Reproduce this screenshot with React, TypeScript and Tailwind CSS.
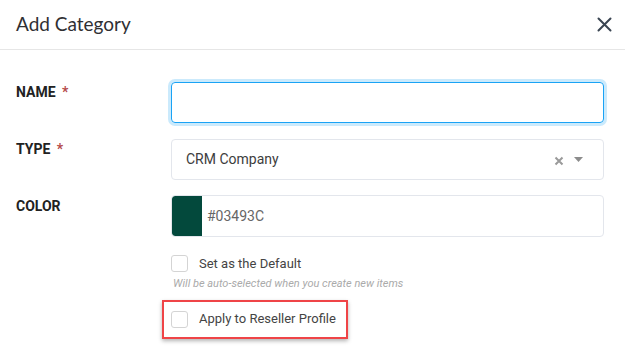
import React from "react";

export default function App() {
  return (
    <div className="w-[625px] h-[348px] bg-white overflow-hidden" style={{ fontFamily: "Roboto, sans-serif" }}>
      <div className="h-[50px] border-b border-[#e6e6e6] flex items-center justify-between pl-4 pr-[13px]">
        <div className="text-[19px] text-[#2f2f33] pb-[1px]" style={{ fontFamily: "Lato, sans-serif" }}>Add Category</div>
        <svg width="15" height="15" viewBox="0 0 15 15" className="mb-[1px]">
          <path d="M1.5 1.5 L13.5 13.5 M13.5 1.5 L1.5 13.5" stroke="#3a4552" strokeWidth="2" strokeLinecap="round" />
        </svg>
      </div>
      <div className="pl-4 pr-[21px] pt-[32px] flex flex-col">
        <div className="flex items-start">
          <div className="w-[155px] text-[14px] font-bold text-[#222] leading-5">
            NAME <span className="text-[#b54a4a] ml-[3px]">*</span>
          </div>
          <div className="flex-1 h-[41px] rounded-[4px] border border-[#1aa3f5] ring-[3px] ring-[#cbeafc]" />
        </div>
        <div className="flex items-start mt-[16px]">
          <div className="w-[155px] text-[14px] font-bold text-[#222] leading-5">
            TYPE <span className="text-[#b54a4a] ml-[3px]">*</span>
          </div>
          <div className="flex-1 h-[41px] rounded-[4px] border border-[#e3e6ec] flex items-center pl-[14px] pr-[20px]">
            <span className="text-[14px] text-[#3d3d3d] flex-1">CRM Company</span>
            <svg width="10" height="10" viewBox="0 0 10 10" className="mr-[10px] mt-[2px]">
              <path d="M1.5 1.5 L8.5 8.5 M8.5 1.5 L1.5 8.5" stroke="#9a9a9a" strokeWidth="2" />
            </svg>
            <svg width="9" height="5" viewBox="0 0 9 5">
              <path d="M0 0 L9 0 L4.5 5 Z" fill="#8c8c8c" />
            </svg>
          </div>
        </div>
        <div className="flex items-start mt-[15px]">
          <div className="w-[155px] pt-[1px] text-[14px] font-bold text-[#222] leading-5">COLOR</div>
          <div className="flex-1 h-[42px] rounded-[4px] border border-[#e3e6ec] flex items-center overflow-hidden">
            <div className="w-[30px] h-full bg-[#03493C] rounded-l-[3px]" />
            <span className="ml-[5px] text-[14px] text-[#666]">#03493C</span>
          </div>
        </div>
        <div className="ml-[155px] mt-[17px] flex items-center gap-[11px]">
          <div className="w-[17px] h-[17px] rounded-[3px] border border-[#d4d4d4]" />
          <span className="text-[13px] text-[#444]">Set as the Default</span>
        </div>
        <div className="ml-[157px] mt-[2px] text-[11px] italic text-[#aaa] leading-4">Will be auto-selected when you create new items</div>
        <div className="ml-[146px] mt-[8px] w-[186px] h-[39px] border-2 border-[#ef4447] shadow-[0_2px_4px_rgba(0,0,0,0.3)] flex items-center pl-[7px] gap-[11px]">
          <div className="w-[17px] h-[17px] rounded-[3px] border border-[#d4d4d4]" />
          <span className="text-[13px] text-[#444]">Apply to Reseller Profile</span>
        </div>
      </div>
    </div>
  );
}
